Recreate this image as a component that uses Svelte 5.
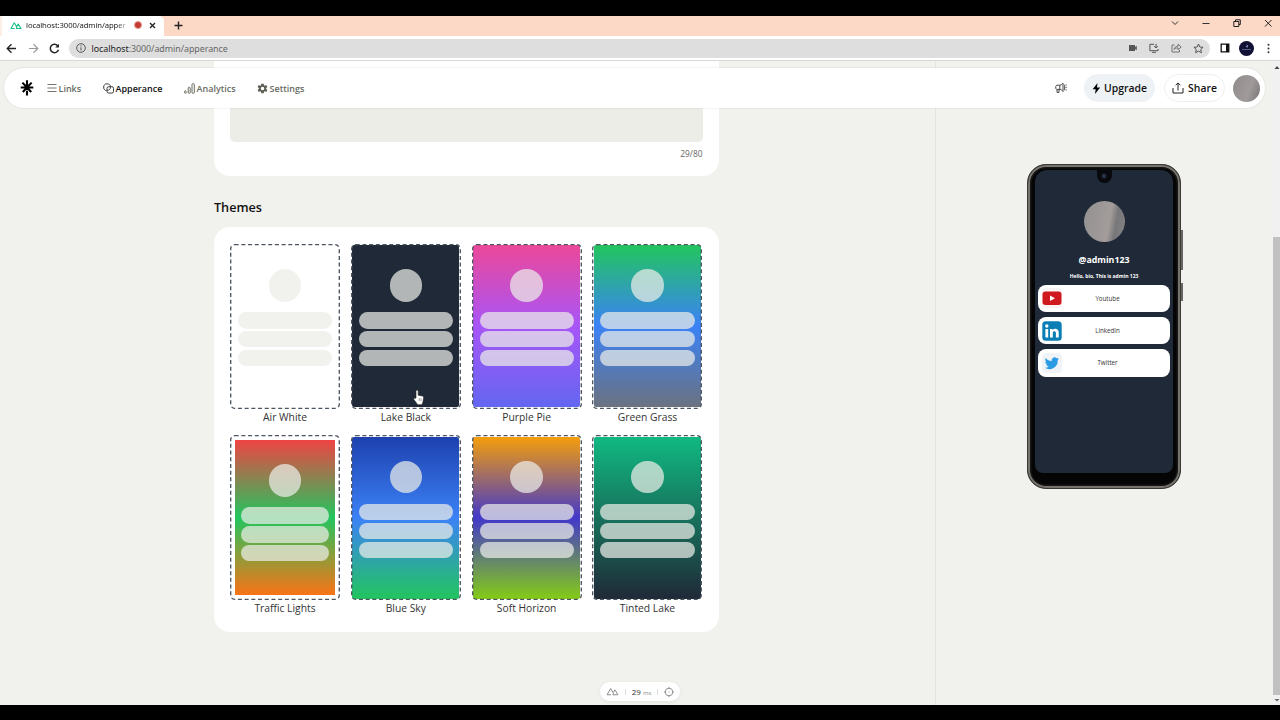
<script>
  const themes = [
    { name: 'Air White', bg: '#ffffff' },
    { name: 'Lake Black', bg: '#1f2937' },
    { name: 'Purple Pie', bg: 'linear-gradient(#ec4899, #a855f7 50%, #6366f1)' },
    { name: 'Green Grass', bg: 'linear-gradient(#22c55e, #3b82f6 50%, #6b7280)' },
    { name: 'Traffic Lights', bg: 'linear-gradient(#ef4444, #22c55e 50%, #f97316)', framed: true },
    { name: 'Blue Sky', bg: 'linear-gradient(#1e40af, #3b82f6 50%, #22c55e)' },
    { name: 'Soft Horizon', bg: 'linear-gradient(#f59e0b, #4338ca 50%, #84cc16)' },
    { name: 'Tinted Lake', bg: 'linear-gradient(#10b981, #1f2937)' }
  ];
  const links = ['Youtube', 'LinkedIn', 'Twitter'];
</script>

<div class="screen">
  <div class="tabs">
    <div class="tab">
      <svg class="nuxt" width="12" height="9" viewBox="0 0 24 16" fill="none" stroke="#19c08a" stroke-width="2.2" stroke-linejoin="round"><path d="M9 14H2L8.6 2.5l5.2 9L12.500 14H22L16.500 5l-2.700 4.500" /></svg>
      <span class="tabtitle">localhost:3000/admin/apper</span>
      <i class="rec"></i>
      <svg width="7" height="7" viewBox="0 0 7 7" stroke="#222" stroke-width="1.3"><path d="M1 1l5 5M6 1L1 6" /></svg>
    </div>
    <svg class="plus" width="9" height="9" viewBox="0 0 9 9" stroke="#222" stroke-width="1.4"><path d="M4.500 .5v8M.5 4.500h8" /></svg>
    <div class="wins">
      <svg width="8" height="8" viewBox="0 0 8 8" fill="none" stroke="#333"><path d="M1 2.500l3 3 3-3" /></svg>
      <svg width="8" height="8" viewBox="0 0 8 8" stroke="#333"><path d="M.5 4.500h7" /></svg>
      <svg width="8" height="8" viewBox="0 0 8 8" fill="none" stroke="#222"><path d="M.8 2.500h5v5h-5zM2.500 2.500V.8h4.800v4.700H5.800" /></svg>
      <svg width="8" height="8" viewBox="0 0 8 8" stroke="#222"><path d="M1 1l6.500 6.500M7.500 1L1 7.500" /></svg>
    </div>
  </div>

  <div class="toolbar">
    <svg width="11" height="11" viewBox="0 0 11 11" fill="none" stroke="#222" stroke-width="1.3"><path d="M10 5.500H1.500M5.500 1.200L1.200 5.500l4.300 4.300" /></svg>
    <svg width="11" height="11" viewBox="0 0 11 11" fill="none" stroke="#999" stroke-width="1.200"><path d="M1 5.500h8.500M5.500 1.200l4.300 4.300-4.300 4.300" /></svg>
    <svg width="11" height="11" viewBox="0 0 11 11" fill="none" stroke="#222" stroke-width="1.500"><path d="M9.500 6.800A4.200 4.200 0 1 1 8.700 2.700L9.600 3.700" /><path d="M9.900 .7v3.700H6.200z" fill="#222" stroke="none" /></svg>
    <div class="url">
      <svg width="10" height="10" viewBox="0 0 10 10" fill="none" stroke="#555"><circle cx="5" cy="5" r="4.300" /><path d="M5 4.300v3.200M5 2.400v1.100" /></svg>
      <span class="addr"><b>localhost</b>:3000/admin/apperance</span>
      <svg width="10" height="10" viewBox="0 0 10 10" fill="#555"><path d="M1 2h6v2l1.800-1.300v4.600L7 6v2H1z" /></svg>
      <svg width="10" height="10" viewBox="0 0 10 10" fill="none" stroke="#555"><path d="M5 1.300H.9v6.400h8.200V6M3 9.300h4M7 .8v4M5.200 3.200L7 5l1.800-1.800" /></svg>
      <svg width="11" height="10" viewBox="0 0 11 10" fill="none" stroke="#666" stroke-width=".9"><path d="M3.500 2H1v7h7.500V7M3 6.500c.3-2 1.700-3.200 4-3.200V1.200L10.200 4 7 6.700V4.900C5.200 4.900 4 5.300 3 6.500z" /></svg>
      <svg width="11" height="11" viewBox="0 0 11 11" fill="none" stroke="#444" stroke-width=".9"><path d="M5.500 1l1.350 3 3.200.35L7.700 6.500l.7 3.200-2.900-1.600-2.900 1.600.7-3.200L.95 4.350l3.200-.35z" /></svg>
    </div>
    <svg class="panel" width="10" height="10" viewBox="0 0 10 10"><path d="M1.200 1.200h7.600v7.600H1.200z" fill="none" stroke="#111" stroke-width="1.300" /><path d="M6 1h3v8H6z" fill="#111" /></svg>
    <svg class="profile" width="15" height="15" viewBox="0 0 15 15"><circle cx="7.500" cy="7.500" r="7.500" fill="#111035" /><path d="M3 8.500h9M7 5.500l1.500-1.500v2.300z" stroke="#8992c4" stroke-width=".6" fill="#8992c4" /></svg>
    <svg width="3" height="11" viewBox="0 0 3 11" fill="#333"><circle cx="1.500" cy="1.800" r="1" /><circle cx="1.500" cy="5.500" r="1" /><circle cx="1.500" cy="9.200" r="1" /></svg>
  </div>

  <div class="page">
    <main>
      <section class="card bio">
        <div class="field"></div>
        <p>29/80</p>
      </section>
      <h2>Themes</h2>
      <section class="card grid">
        {#each themes as t}
          <div class="theme">
            <div class="tile" class:framed={t.framed}>
              <div class="fill" style="background: {t.bg}">
                <span class="dot"></span>
                <span class="bar"></span>
                <span class="bar"></span>
                <span class="bar"></span>
              </div>
              <svg class="dash" width="110" height="165" viewBox="0 0 110 165"><rect x=".7" y=".7" width="108.600" height="163.600" rx="4" fill="none" stroke="#4b5560" stroke-width="1.330" stroke-dasharray="4 2.700" /></svg>
            </div>
            <span class="name">{t.name}</span>
          </div>
        {/each}
      </section>
    </main>

    <aside>
      <div class="phone">
        <i class="side one"></i><i class="side two"></i>
        <div class="display">
          <span class="notch"><i></i></span>
          <span class="photo"></span>
          <strong>@admin123</strong>
          <em>Hello, bio, This is admin 123</em>
          {#each links as l}
            <div class="link">
              {#if l === 'Youtube'}
                <svg width="20" height="20" viewBox="0 0 20 20"><rect width="20" height="20" rx="4" fill="#faf3f3" /><rect x=".5" y="3.500" width="19" height="13.500" rx="3" fill="#d0181f" /><path d="M8 7.400l5 2.800-5 2.800z" fill="#fff" /></svg>
              {:else if l === 'LinkedIn'}
                <svg width="20" height="20" viewBox="0 0 20 20"><rect x=".3" y=".3" width="19.400" height="19.400" rx="3.500" fill="#0b7fb5" /><circle cx="4.800" cy="5" r="1.700" fill="#fff" /><path d="M3.400 8h2.800v8.500H3.400zM8 8h2.700v1.200c1.700-2.400 6-1.800 6 2.300v5h-2.800V12c0-2.400-3.100-2.200-3.100 0v4.500H8z" fill="#fff" /></svg>
              {:else}
                <svg width="20" height="20" viewBox="0 0 20 20"><rect width="20" height="20" rx="4" fill="#f1f4f7" /><path transform="translate(2.800 2.800) scale(.6)" d="M23.600 4.900c-.9.400-1.800.6-2.800.8 1-.6 1.800-1.600 2.200-2.700-1 .6-2 1-3.100 1.200a4.900 4.900 0 0 0-8.400 4.500C7.400 8.500 3.800 6.500 1.300 3.500.1 5.700.7 8.500 2.900 10c-.8 0-1.600-.2-2.200-.6 0 2.300 1.600 4.400 3.900 4.900-.7.200-1.500.2-2.200.1.600 2 2.400 3.400 4.600 3.400A9.900 9.900 0 0 1 0 19.900 13.900 13.900 0 0 0 21.500 7.400c.8-.7 1.500-1.500 2.100-2.500z" fill="#2b9be3" /></svg>
              {/if}
              <span>{l}</span>
            </div>
          {/each}
        </div>
      </div>
    </aside>

    <header>
      <svg class="logo" width="14" height="16" viewBox="0 0 14 16" stroke="#000" stroke-width="2.100"><path d="M7 .3v7.400M7 10.800V15.500M.7 7.500h12.600M2.400 2.600L7 7.500 11.600 2.600M2.800 12l4.200-4.500 4.200 4.500" fill="none" /></svg>
      <span class="nav links"><svg width="10" height="10" viewBox="0 0 10 10" stroke="#777870" stroke-width="1"><path d="M.5 1.500h9M.5 5h9M.5 8.500h9" /></svg>Links</span>
      <span class="nav app"><svg width="11" height="11" viewBox="0 0 11.500 11" fill="none" stroke="#333" stroke-width="1"><path d="M3.500 7.600H2.700L.8 5.700V2.600L2.700.7h3.100l1.900 1.900v.7" /><rect x="4.200" y="3.600" width="6.800" height="6.700" rx="1.800" /><path d="M4 7.400h1.700l2-2v-2" /></svg>Apperance</span>
      <span class="nav ana"><svg width="11" height="11" viewBox="0 0 11 11" fill="none" stroke="#676b5f"><rect x=".6" y="7.800" width="1.500" height="2.500" rx=".7" /><rect x="4.200" y="4.300" width="2" height="6" rx=".8" /><rect x="8" y=".7" width="2.300" height="9.600" rx=".8" /></svg>Analytics</span>
      <span class="nav set"><svg width="11" height="11" viewBox="1 1 22 22" fill="#5c6054"><path fill-rule="evenodd" d="M19.400 13c.1-.7.1-1.300 0-2l2.400-1.800-2.400-4-2.800 1.100-1.700-1L14.500 2.300h-5l-.5 3-1.700 1-2.800-1.100-2.300 4L4.600 11v2l-2.400 1.800 2.300 4 2.800-1.100 1.700 1 .5 3h5l.4-3 1.700-1 2.800 1.100 2.400-4zM12 15.500a3.500 3.500 0 1 1 0-7 3.500 3.500 0 0 1 0 7z" /></svg>Settings</span>
      <svg class="horn" width="12" height="12" viewBox="0 0 12 12" fill="none" stroke="#333" stroke-width=".9"><path d="M4.800 3.200H1.800L.8 4.200v2.200l1 1h3M4.800 3.200C6.300 3.200 7 2.200 8 1.200v8.300c-1-1-1.700-2.100-3.200-2.100M4.800 3.200v4.200M2 7.400v3h2v-3M9.700 2.800v5.400M11.200 2.500v1M11.200 5v1M11.200 7.500v1" /></svg>
      <div class="pill up"><svg width="9" height="11" viewBox="0 0 9 11" fill="#000"><path d="M5.500 0L.7 6.300h3L3 11l5.200-6.500H5z" /></svg><span>Upgrade</span></div>
      <div class="pill share"><svg width="12" height="12" viewBox="0 0 12 12" fill="none" stroke="#222" stroke-width="1"><path d="M1 6v5h10V6M6 8.500V1.200M3.600 3.300L6 .9l2.400 2.400" /></svg><span>Share</span></div>
      <span class="avatar"></span>
    </header>

    <div class="scroll">
      <svg width="7" height="10" viewBox="0 0 7 10"><path d="M1.500 8h5L4 5z" fill="#444" /></svg>
      <i></i>
      <svg width="7" height="10" viewBox="0 0 7 10"><path d="M1.500 4h5L4 6.500z" fill="#666" /></svg>
    </div>

    <div class="dev">
      <svg width="13" height="9" viewBox="0 0 24 16" fill="none" stroke="#8a8a8a" stroke-width="1.800" stroke-linejoin="round"><path d="M9 14H2L8.600 2.500l5.200 9L12.500 14H22L16.500 5l-2.700 4.500" /></svg>
      <i></i><span>29 <small>ms</small></span><i></i>
      <svg width="10" height="10" viewBox="0 0 10 10" fill="none" stroke="#888" stroke-width=".9"><circle cx="5" cy="5" r="3.800" /><path d="M5 0v2M5 8v2M0 5h2M8 5h2M4.500 5h1" /></svg>
    </div>

    <svg class="cursor" width="12" height="17" viewBox="0 0 12 17"><path d="M3 9V2.200a1.100 1.100 0 0 1 2.200 0V6.200l4 .8c1 .2 1.500.8 1.400 1.800l-.6 4-1 2.900H4.700L1 10.700c-.6-1 .5-2 1.300-1.400z" fill="#fff" stroke="#222" stroke-width=".6" /><path d="M6.300 9v3M8 9v3" stroke="#555" stroke-width=".5" /></svg>
  </div>
</div>

<style>
  :global(body) { margin: 0; background: #000; }
  * { box-sizing: border-box; }
  svg { display: block; flex: none; }
  .screen { width: 1280px; height: 720px; padding: 16px 0 15px; background: #000; display: flex; flex-direction: column; overflow: hidden; font-family: "Open Sans", "Noto Sans", sans-serif; color: #222; }
  .tabs { height: 20px; flex: none; background: #fcd8c6; display: flex; align-items: center; }
  .tab { width: 164px; height: 20px; background: #fff; border-radius: 0 5px 0 0; display: flex; align-items: center; padding-left: 10px; box-shadow: inset 2px 0 #fdeee6; }
  .tab > * { transform: translateY(-1px); }
  .tabtitle { font-family: "Noto Sans", sans-serif; font-size: 7.700px; width: 103px; margin-left: 4px; white-space: nowrap; letter-spacing: -.1px; line-height: 14px; mask-image: linear-gradient(90deg, #000 88%, #0003 98%); }
  .rec { width: 8px; height: 8px; border-radius: 50%; background: #c13b30; border: 1px solid #e4968f; margin: 0 7px 0 5px; }
  .plus { margin-left: 10px; margin-top: -2px; }
  .wins { margin-left: auto; display: flex; gap: 23px; padding-right: 8px; margin-top: -6px; }
  .toolbar { height: 25px; flex: none; background: #fff; border-bottom: 1px solid #d8d8d8; display: flex; align-items: center; padding-left: 6px; }
  .toolbar > svg:nth-child(2), .toolbar > svg:nth-child(3) { margin-left: 10.500px; }
  .url { width: 1141px; height: 19px; border-radius: 10px; margin-left: 9px; background: #dedede; display: flex; align-items: center; padding: 0 6px 0 7px; gap: 11.500px; }
  .addr { flex: 1; font-family: "Noto Sans", sans-serif; font-size: 8.900px; letter-spacing: -.04px; color: #666; margin-left: -6px; }
  .addr b { font-weight: 400; color: #222; }
  .panel { margin-left: 10px; }
  .profile { margin: 0 13px 0 9px; }
  .page { position: relative; flex: 1; min-height: 0; background: #f1f2ee; display: grid; grid-template-columns: 936px 1fr; overflow: hidden; }
  main { padding-left: 214px; border-right: 1px solid #e4e5e1; }
  .card { width: 504.500px; background: #fff; border-radius: 16px; }
  .bio { height: 115px; border-radius: 0 0 16px 16px; padding: 20px 16px 0; }
  .field { height: 61.300px; background: #ecede7; border-radius: 0 0 5px 5px; }
  .bio p { margin: 5.700px 0 0; text-align: right; font-size: 8.400px; line-height: 12px; color: #666; }
  h2 { margin: 21px 0 10px; font-size: 12.700px; line-height: 20px; font-weight: 600; color: #111; letter-spacing: -.05px; }
  .grid { height: 405px; padding: 16.500px 16px; display: grid; grid-template-columns: repeat(4, 110px); justify-content: space-between; grid-auto-rows: 191.700px; }
  .theme { display: flex; flex-direction: column; }
  .tile { position: relative; height: 165px; padding: 1.400px; border-radius: 5px; }
  .framed { padding: 4.900px; }
  .fill { height: 100%; display: flex; flex-direction: column; align-items: center; padding: 24.200px 6.600px 0; gap: 2.400px; border-radius: 2px; }
  .framed .fill { border-radius: 0; }
  .dash { position: absolute; inset: 0; }
  .dot { width: 32.500px; height: 32.500px; border-radius: 50%; background: #ecede7; opacity: .72; margin-bottom: 8.300px; }
  .bar { align-self: stretch; height: 16.400px; border-radius: 9px; background: #ecede7; opacity: .72; }
  .name { text-align: center; font-size: 10.300px; line-height: 14px; margin-top: 1px; color: #333; }
  aside { padding: 103px 0 0 91px; }
  .phone { position: relative; width: 154px; height: 325px; border-radius: 19px; background: #050505; border: 1.500px solid #383834; box-shadow: inset 0 0 0 2px #77736d, inset 0 0 0 3.500px #171717; padding: 5px 7px 15px 7px; }
  .side { position: absolute; right: -2.500px; width: 1.500px; background: #666; }
  .one { top: 65px; height: 40px; }
  .two { top: 118px; height: 18px; }
  .display { position: relative; height: 100%; background: #1f2937; border-radius: 12px 12px 8px 8px; display: flex; flex-direction: column; align-items: center; padding: 31px 3.500px 0; }
  .notch { position: absolute; top: -2px; left: 61.500px; width: 15px; height: 15px; background: #07090c; border-radius: 2px 2px 8px 8px; display: grid; place-items: center; }
  .notch i { width: 6px; height: 6px; border-radius: 50%; background: #293344; border: 1px solid #101722; }
  .photo { width: 41px; height: 41px; flex: none; border-radius: 50%; background: linear-gradient(100deg, #939192, #a39c9b 60%, #777779 75%, #858385); }
  strong { font-size: 8.800px; line-height: 14px; margin-top: 11px; color: #fff; font-weight: 700; }
  em { font-style: normal; font-weight: 700; font-size: 5px; line-height: 8px; color: #fff; white-space: nowrap; margin: 5px 0 4.500px; }
  .link { width: 132px; height: 27.500px; flex: none; border-radius: 8px; background: #fff; display: flex; align-items: center; padding-left: 4px; margin-bottom: 4.800px; }
  .link span { flex: 1; text-align: center; padding-right: 17px; font-size: 6.200px; color: #333; }
  header { position: absolute; left: 4px; top: 7px; width: 1261px; height: 40px; border-radius: 20px; background: #fff; box-shadow: 0 0 2px #0002; display: flex; align-items: center; padding-left: 16px; }
  .nav { display: flex; align-items: center; gap: 1.500px; font-size: 9px; font-weight: 600; color: #676b5f; white-space: nowrap; }
  .links { margin-left: 13px; width: 56px; }
  .app { color: #111; width: 81px; }
  .ana { width: 73px; }
  .horn { margin-left: auto; }
  .pill { height: 28px; border-radius: 14px; display: flex; align-items: center; justify-content: center; font-size: 10.400px; font-weight: 600; color: #111; gap: 3px; }
  .pill span { margin-top: -1px; }
  .up { width: 71px; background: #eff2f5; margin-left: 17px; }
  .share { width: 61px; border: 1px solid #f0f0f0; gap: 4px; margin-left: 9px; }
  .avatar { width: 27px; height: 27px; border-radius: 50%; background: linear-gradient(110deg, #918c8c, #a09b9a 60%, #777375); margin: 0 5px 0 8px; }
  .scroll { position: absolute; right: 0; top: 0; width: 7px; height: 100%; background: #f1f1f1; display: flex; flex-direction: column; }
  .scroll i { margin-top: 166px; height: 458px; background: #c1c1c1; }
  .dev { position: absolute; left: 600px; top: 621px; width: 80px; height: 19px; border-radius: 10px; background: #fff; box-shadow: 0 1px 4px #0001; display: flex; align-items: center; justify-content: space-between; padding: 0 6px; font-size: 8px; color: #333; }
  .dev i { width: 1px; height: 6px; background: #ddd; }
  .dev span { margin-top: -1px; }
  .dev small { font-size: 6px; color: #888; }
  .cursor { position: absolute; left: 413px; top: 328px; }
</style>
